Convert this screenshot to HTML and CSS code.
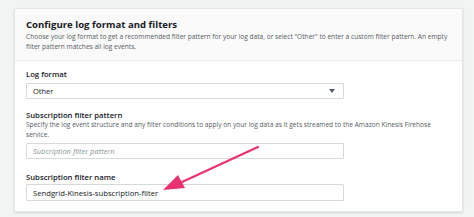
FILE: index.html
```
<!DOCTYPE html>
<html>
<head>
<meta charset="utf-8">
<link rel="stylesheet" href="styles.css">
</head>
<body>
<div class="card">
  <div class="card-header">
    <h2 class="title">Configure log format and filters</h2>
    <p class="desc header-desc">Choose your log format to get a recommended filter pattern for your log data, or select "Other" to enter a custom filter pattern. An empty filter pattern matches all log events.</p>
  </div>
  <div class="card-body">
    <div class="field field-first">
      <div class="label">Log format</div>
      <div class="control select"><span>Other</span><span class="caret"></span></div>
    </div>
    <div class="field field-second">
      <div class="label">Subscription filter pattern</div>
      <p class="desc field-desc">Specify the log event structure and any filter conditions to apply on your log data as it gets streamed to the Amazon Kinesis Firehose service.</p>
      <div class="control placeholder">Subcription filter pattern</div>
    </div>
    <div class="field field-third">
      <div class="label">Subscription filter name</div>
      <div class="control value tall">Sendgrid-Kinesis-subscription-filter</div>
    </div>
  </div>
  <svg class="arrow" width="120" height="60" viewBox="0 0 120 60">
    <line x1="104" y1="2" x2="28" y2="37" stroke="#e8336e" stroke-width="2.2" stroke-linecap="round"/>
    <polygon points="9,45 24,30 31,43" fill="#e8336e"/>
  </svg>
</div>
</body>
</html>
```
FILE: styles.css
```
html, body {
  margin: 0;
  padding: 0;
}
body {
  background: #f2f3f3;
  font-family: "Open Sans", "Liberation Sans", sans-serif;
  color: #16191f;
  width: 474px;
  height: 217px;
  overflow: hidden;
  padding-top: 8px;
  padding-left: 14px;
  box-sizing: border-box;
}
.card {
  position: relative;
  width: 449px;
  height: 204px;
  box-sizing: border-box;
  background: #ffffff;
  border: 1px solid #e4e7e7;
  box-shadow: 0 1px 2px rgba(0,0,0,0.12);
}
.card-header {
  background: #fafafa;
  border-bottom: 1px solid #eaeded;
  padding: 10px 4px 8px 11px;
  height: 52px;
  box-sizing: border-box;
}
.title {
  margin: 0;
  font-size: 9.6px;
  line-height: 12px;
  font-weight: 700;
  color: #16191f;
}
.desc {
  margin: 1px 0 0 0;
  font-size: 6.6px;
  line-height: 10px;
  color: #545b64;
}
.header-desc {
  max-width: 426px;
}
.card-body {
  padding: 8px 11px 0 11px;
}
.label {
  font-size: 7.7px;
  line-height: 10px;
  font-weight: 600;
  color: #16191f;
}
.field-second {
  margin-top: 11px;
}
.field-third {
  margin-top: 13px;
}
.field-desc {
  margin: 0;
  max-width: 412px;
}
.control {
  width: 318px;
  height: 16px;
  box-sizing: border-box;
  border: 1px solid #d5dbdb;
  border-radius: 1px;
  background: #fff;
  font-size: 7.5px;
  line-height: 14px;
  padding-left: 6px;
  display: flex;
  align-items: center;
}
.field-first .control {
  margin-top: 4px;
}
.field-second .control {
  margin-top: 3px;
}
.field-third .control {
  margin-top: 2px;
}
.tall {
  height: 17px;
}
.select {
  justify-content: space-between;
  padding-right: 8px;
}
.caret {
  width: 0;
  height: 0;
  border-left: 3px solid transparent;
  border-right: 3px solid transparent;
  border-top: 4px solid #545b64;
}
.placeholder {
  font-style: italic;
  color: #879596;
}
.value {
  font-size: 7.7px;
  font-weight: 500;
  color: #16191f;
}
.arrow {
  position: absolute;
  left: 139px;
  top: 136px;
}
```
